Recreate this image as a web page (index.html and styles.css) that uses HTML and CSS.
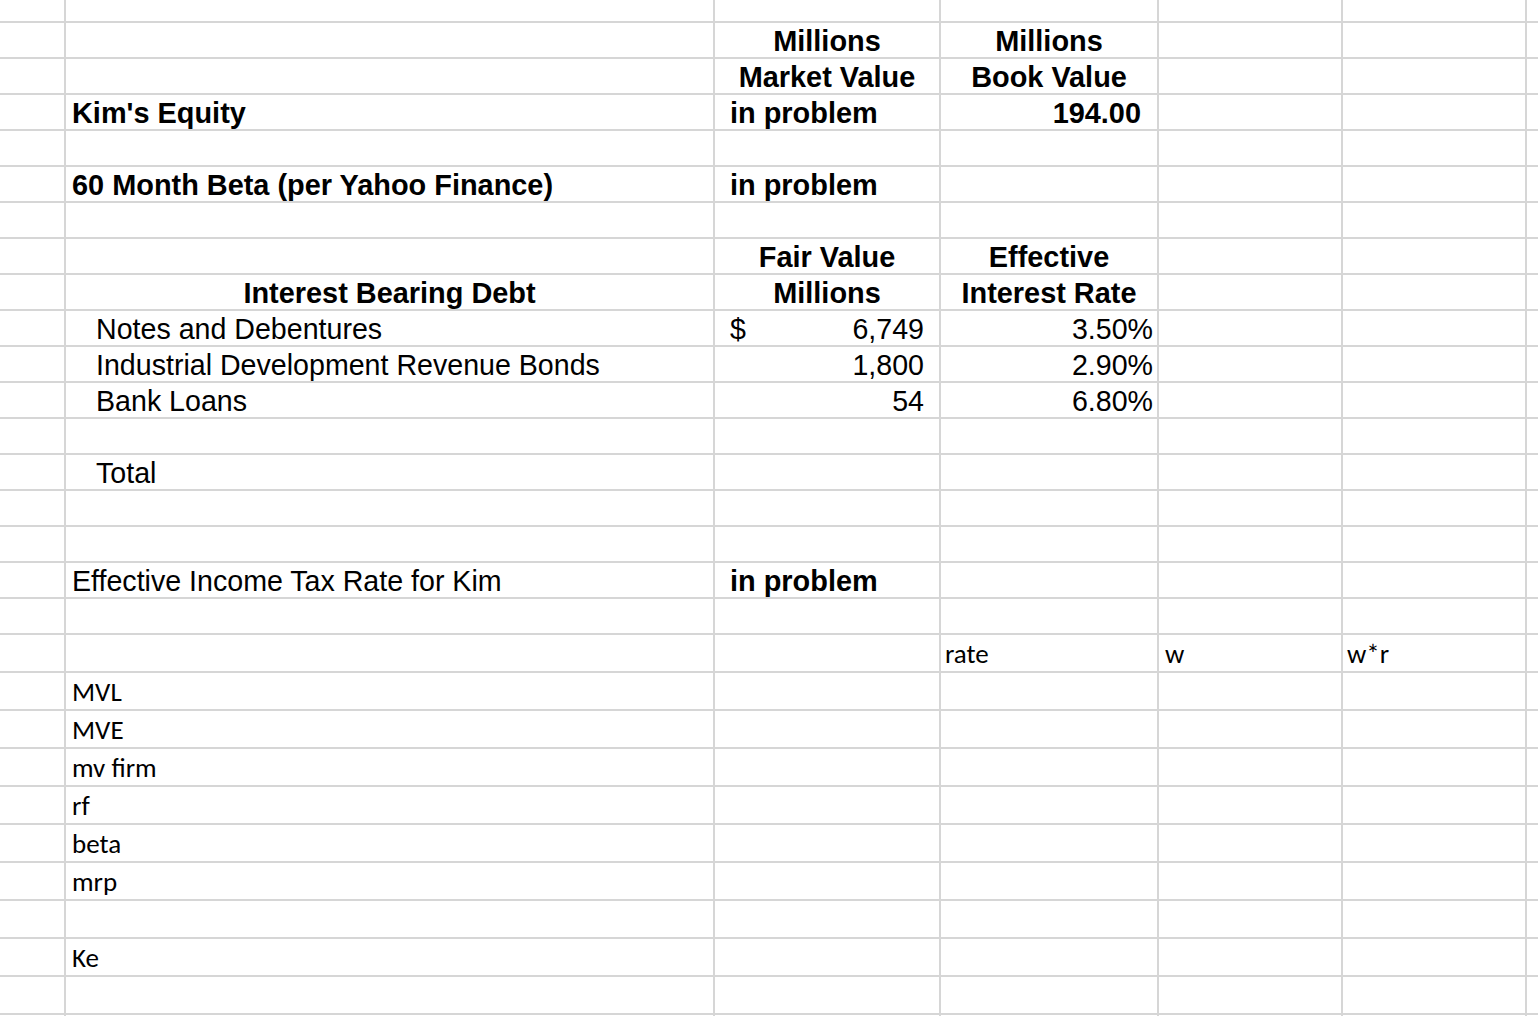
FILE: index.html
```html
<!DOCTYPE html>
<html>
<head>
<meta charset="utf-8">
<link rel="stylesheet" href="styles.css">
</head>
<body>
<div class="sheet">
  <!-- row 0 -->
  <div class="c"></div><div class="c"></div><div class="c"></div><div class="c"></div><div class="c"></div><div class="c"></div><div class="c"></div>
  <!-- row 1 -->
  <div class="c"></div><div class="c"></div><div class="c b ctr">Millions</div><div class="c b ctr">Millions</div><div class="c"></div><div class="c"></div><div class="c"></div>
  <!-- row 2 -->
  <div class="c"></div><div class="c"></div><div class="c b ctr">Market Value</div><div class="c b ctr">Book Value</div><div class="c"></div><div class="c"></div><div class="c"></div>
  <!-- row 3 -->
  <div class="c"></div><div class="c b lbl">Kim's Equity</div><div class="c b inp">in problem</div><div class="c b num bv">194.00</div><div class="c"></div><div class="c"></div><div class="c"></div>
  <!-- row 4 -->
  <div class="c"></div><div class="c"></div><div class="c"></div><div class="c"></div><div class="c"></div><div class="c"></div><div class="c"></div>
  <!-- row 5 -->
  <div class="c"></div><div class="c b lbl">60 Month Beta (per Yahoo Finance)</div><div class="c b inp">in problem</div><div class="c"></div><div class="c"></div><div class="c"></div><div class="c"></div>
  <!-- row 6 -->
  <div class="c"></div><div class="c"></div><div class="c"></div><div class="c"></div><div class="c"></div><div class="c"></div><div class="c"></div>
  <!-- row 7 -->
  <div class="c"></div><div class="c"></div><div class="c b ctr">Fair Value</div><div class="c b ctr">Effective</div><div class="c"></div><div class="c"></div><div class="c"></div>
  <!-- row 8 -->
  <div class="c"></div><div class="c b ctr">Interest Bearing Debt</div><div class="c b ctr">Millions</div><div class="c b ctr">Interest Rate</div><div class="c"></div><div class="c"></div><div class="c"></div>
  <!-- row 9 -->
  <div class="c"></div><div class="c ind">Notes and Debentures</div><div class="c acct"><span>$</span><span>6,749</span></div><div class="c num pct">3.50%</div><div class="c"></div><div class="c"></div><div class="c"></div>
  <!-- row 10 -->
  <div class="c"></div><div class="c ind">Industrial Development Revenue Bonds</div><div class="c acct"><span></span><span>1,800</span></div><div class="c num pct">2.90%</div><div class="c"></div><div class="c"></div><div class="c"></div>
  <!-- row 11 -->
  <div class="c"></div><div class="c ind">Bank Loans</div><div class="c acct"><span></span><span>54</span></div><div class="c num pct">6.80%</div><div class="c"></div><div class="c"></div><div class="c"></div>
  <!-- row 12 -->
  <div class="c"></div><div class="c"></div><div class="c"></div><div class="c"></div><div class="c"></div><div class="c"></div><div class="c"></div>
  <!-- row 13 -->
  <div class="c"></div><div class="c ind">Total</div><div class="c"></div><div class="c"></div><div class="c"></div><div class="c"></div><div class="c"></div>
  <!-- row 14 -->
  <div class="c"></div><div class="c"></div><div class="c"></div><div class="c"></div><div class="c"></div><div class="c"></div><div class="c"></div>
  <!-- row 15 -->
  <div class="c"></div><div class="c"></div><div class="c"></div><div class="c"></div><div class="c"></div><div class="c"></div><div class="c"></div>
  <!-- row 16 -->
  <div class="c"></div><div class="c lbl">Effective Income Tax Rate for Kim</div><div class="c b inp">in problem</div><div class="c"></div><div class="c"></div><div class="c"></div><div class="c"></div>
  <!-- row 17 -->
  <div class="c"></div><div class="c"></div><div class="c"></div><div class="c"></div><div class="c"></div><div class="c"></div><div class="c"></div>
  <!-- row 18 -->
  <div class="c"></div><div class="c"></div><div class="c"></div><div class="c cal tl">rate</div><div class="c cal tw">w</div><div class="c cal tl">w*r</div><div class="c"></div>
  <!-- row 19 -->
  <div class="c"></div><div class="c cal lbl">MVL</div><div class="c"></div><div class="c"></div><div class="c"></div><div class="c"></div><div class="c"></div>
  <!-- row 20 -->
  <div class="c"></div><div class="c cal lbl">MVE</div><div class="c"></div><div class="c"></div><div class="c"></div><div class="c"></div><div class="c"></div>
  <!-- row 21 -->
  <div class="c"></div><div class="c cal lbl">mv firm</div><div class="c"></div><div class="c"></div><div class="c"></div><div class="c"></div><div class="c"></div>
  <!-- row 22 -->
  <div class="c"></div><div class="c cal lbl">rf</div><div class="c"></div><div class="c"></div><div class="c"></div><div class="c"></div><div class="c"></div>
  <!-- row 23 -->
  <div class="c"></div><div class="c cal lbl">beta</div><div class="c"></div><div class="c"></div><div class="c"></div><div class="c"></div><div class="c"></div>
  <!-- row 24 -->
  <div class="c"></div><div class="c cal lbl">mrp</div><div class="c"></div><div class="c"></div><div class="c"></div><div class="c"></div><div class="c"></div>
  <!-- row 25 -->
  <div class="c"></div><div class="c"></div><div class="c"></div><div class="c"></div><div class="c"></div><div class="c"></div><div class="c"></div>
  <!-- row 26 -->
  <div class="c"></div><div class="c cal lbl">Ke</div><div class="c"></div><div class="c"></div><div class="c"></div><div class="c"></div><div class="c"></div>
  <!-- row 27 -->
  <div class="c"></div><div class="c"></div><div class="c"></div><div class="c"></div><div class="c"></div><div class="c"></div><div class="c"></div>
  <!-- row 28 -->
  <div class="c"></div><div class="c"></div><div class="c"></div><div class="c"></div><div class="c"></div><div class="c"></div><div class="c"></div>
</div>
</body>
</html>
```

FILE: styles.css
```css
html, body {
  margin: 0;
  padding: 0;
  background: #ffffff;
  overflow: hidden;
}

.sheet {
  display: grid;
  grid-template-columns: 64px 647px 224px 216px 182px 182px 1fr;
  grid-template-rows: 21px repeat(17, 34px) repeat(10, 36px) 20px;
  gap: 2px;
  background: #d6d6d6;
  width: 1538px;
  height: 1016px;
  overflow: hidden;
  font-family: "Liberation Sans", Arial, sans-serif;
  font-size: 28.6px;
  color: #000;
}

.c {
  background: #ffffff;
  line-height: 34px;
  white-space: nowrap;
  overflow: visible;
  padding-top: 1px;
  box-sizing: border-box;
}

.b {
  font-weight: bold;
  font-size: 28.9px;
}

.ctr { text-align: center; }

.lbl { padding-left: 6px; }

.ind { padding-left: 30px; }

.inp { padding-left: 15px; }

.num { text-align: right; }

.bv { padding-right: 16px; }

.pct { padding-right: 4px; }

.acct {
  display: flex;
  justify-content: space-between;
  padding-left: 15px;
  padding-right: 15px;
}

.cal {
  font-family: Carlito, Calibri, Lato, sans-serif;
  font-size: 27px;
  line-height: 36px;
  padding-top: 1px;
}

.tl { padding-left: 4px; }

.tw { padding-left: 6px; }
```
